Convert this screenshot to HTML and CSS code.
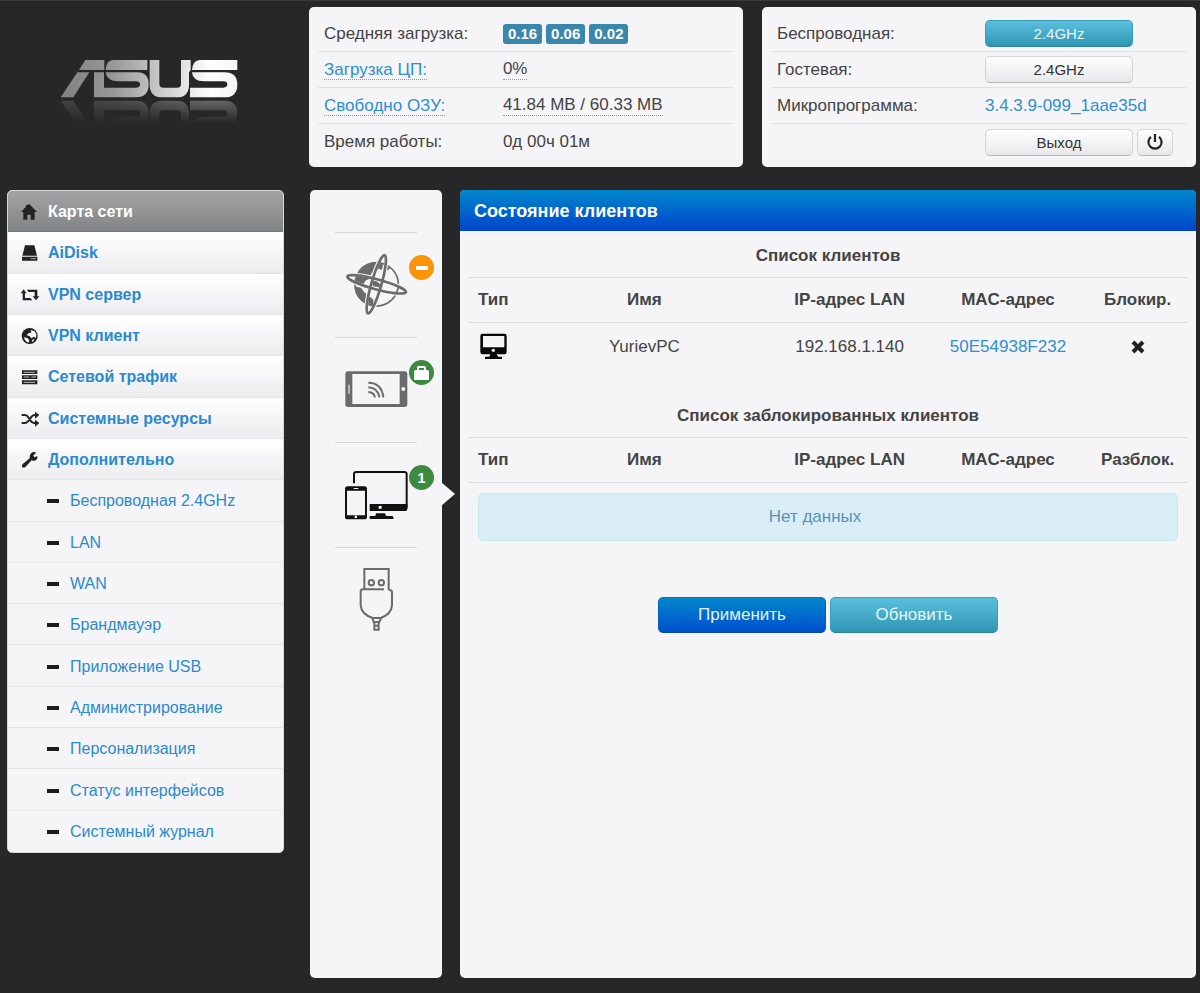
FILE: index.html
```html
<!DOCTYPE html>
<html lang="ru">
<head>
<meta charset="utf-8">
<title>ASUS — Карта сети</title>
<meta name="viewport" content="width=device-width, initial-scale=1">
<link rel="stylesheet" href="styles.css">
</head>
<body>
<div class="page">
  <aside class="side">
    <a class="logo" href="#" aria-label="ASUS">
      <svg viewBox="0 0 660 250" role="img" aria-hidden="true">
        <defs>
          <linearGradient id="metal" gradientUnits="userSpaceOnUse" x1="60" y1="0" x2="592" y2="0">
            <stop offset="0" stop-color="#808082"/><stop offset="0.3" stop-color="#98989a"/><stop offset="0.6" stop-color="#d0d0d2"/><stop offset="0.85" stop-color="#ffffff"/><stop offset="1" stop-color="#f4f4f4"/>
          </linearGradient>
          <linearGradient id="fade" gradientUnits="userSpaceOnUse" x1="0" y1="172" x2="0" y2="105">
            <stop offset="0" stop-color="#fff" stop-opacity="0.3"/><stop offset="1" stop-color="#fff" stop-opacity="0"/>
          </linearGradient>
          <mask id="mirror" maskUnits="userSpaceOnUse" x="0" y="0" width="660" height="250"><rect width="660" height="250" fill="url(#fade)"/></mask>
          <g id="mark" fill="url(#metal)">
            <path d="M136 60H193V90H117Z"/>
            <path d="M112 97H148L100 172H62Z"/>
            <path d="M162 97H192V143H290Q300 143 300 133Q300 124 288 124H235Q200 124 197 97H292Q326 97 326 133Q326 172 288 172H162Z"/>
            <path d="M216 60H322V90H197Q198 64 216 60Z"/>
            <path d="M329 60H358V132Q358 143 370 143H412Q423 143 423 132V60H452V90L447 97V134Q447 172 410 172H368Q329 172 329 134Z"/>
            <path d="M478 60H592V90H456Q458 62 478 60Z"/>
            <path d="M456 97H553Q592 97 592 134Q592 172 553 172H450V143H550Q562 143 562 133Q562 124 550 124H492Q458 124 456 97Z"/>
          </g>
        </defs>
        <use href="#mark"/>
        <g transform="translate(0 354) scale(1 -1)"><g mask="url(#mirror)"><use href="#mark"/></g></g>
      </svg>
    </a>
    <nav class="menu" aria-label="Главное меню">
      <a class="item item-active" href="#"><svg class="nav-icon" viewBox="60 65 60 60"><path d="M87 70L111 95H104V118H92V103H82V118H70V95H63L78 79V74H84V73Z"/></svg>Карта сети</a>
      <a class="item" href="#"><svg class="nav-icon" viewBox="60 190 60 60"><path d="M75 197H103L111 228H67ZM66 231H112V243H66Z"/><path d="M92 237H108" stroke="#aaa" stroke-width="3"/></svg>AiDisk</a>
      <a class="item" href="#"><svg class="nav-icon" viewBox="60 315 60 60"><path d="M71 328L80 340H75V354H91L97 361H68V340H62ZM80 329H112V349H118L108 361L98 349H104V336H86Z"/></svg>VPN сервер</a>
      <a class="item" href="#"><svg class="nav-icon" viewBox="60 439 60 60"><circle cx="89" cy="469" r="24"/><path fill="#fafafa" d="M92 451L104 455L109 464L108 475L101 471L94 476L88 469L80 467L86 460L94 459ZM72 473L82 475L88 482L85 489Q74 485 72 473ZM97 480L104 478L100 485L96 487Z"/></svg>VPN клиент</a>
      <a class="item" href="#"><svg class="nav-icon" viewBox="60 563 60 60"><path d="M66 573H112V584H66ZM66 588H112V599H66ZM66 603H112V615H66Z"/><path d="M71 579H105M71 593H88M94 593H108M71 609H105" stroke="#bbb" stroke-width="3"/></svg>Сетевой трафик</a>
      <a class="item" href="#"><svg class="nav-icon" viewBox="60 687 60 60"><path d="M65 705H75Q81 705 85 712L92 722Q96 729 102 729H107M65 729H74Q80 729 84 724L95 710Q99 705 104 705H107" fill="none" stroke="#222" stroke-width="6"/><path d="M105 695L118 705L105 716ZM105 719L118 729L105 740Z"/></svg>Системные ресурсы</a>
      <a class="item" href="#"><svg class="nav-icon" viewBox="60 811 60 60"><path d="M109 819L100 827L103 833L112 829Q114 840 104 843Q98 844 95 842L76 862Q69 866 66 861Q64 857 69 852L89 836Q87 826 94 820Q101 815 109 819Z"/></svg>Дополнительно</a>
      <a class="item sub" href="#">Беспроводная 2.4GHz</a>
      <a class="item sub" href="#">LAN</a>
      <a class="item sub" href="#">WAN</a>
      <a class="item sub" href="#">Брандмауэр</a>
      <a class="item sub" href="#">Приложение USB</a>
      <a class="item sub" href="#">Администрирование</a>
      <a class="item sub" href="#">Персонализация</a>
      <a class="item sub" href="#">Статус интерфейсов</a>
      <a class="item sub" href="#">Системный журнал</a>
    </nav>
  </aside>

  <div class="main">
    <header class="cards">
      <dl class="card card-load">
        <div class="row"><dt>Средняя загрузка:</dt><dd><span class="tag">0.16</span><span class="tag">0.06</span><span class="tag">0.02</span></dd></div>
        <div class="row"><dt><a class="hint" href="#">Загрузка ЦП:</a></dt><dd><span class="hint">0%</span></dd></div>
        <div class="row"><dt><a class="hint" href="#">Свободно ОЗУ:</a></dt><dd><span class="hint">41.84 MB / 60.33 MB</span></dd></div>
        <div class="row"><dt>Время работы:</dt><dd>0д 00ч 01м</dd></div>
      </dl>
      <dl class="card card-radio">
        <div class="row"><dt>Беспроводная:</dt><dd><button class="btn btn-small btn-info" type="button">2.4GHz</button></dd></div>
        <div class="row"><dt>Гостевая:</dt><dd><button class="btn btn-small" type="button">2.4GHz</button></dd></div>
        <div class="row"><dt>Микропрограмма:</dt><dd><a href="#">3.4.3.9-099_1aae35d</a></dd></div>
        <div class="row"><dt></dt><dd><button class="btn btn-small" type="button">Выход</button><button class="btn btn-power" type="button" aria-label="Перезагрузка"><svg viewBox="0 0 18 18"><path d="M5 3.8A6.6 6.6 0 1 0 13 3.8M9 1V9" fill="none" stroke="#222" stroke-width="2.2"/></svg></button></dd></div>
      </dl>
    </header>

    <div class="work">
      <nav class="rail" aria-label="Карта сети">
        <a class="stop" href="#" aria-label="Интернет">
          <svg viewBox="102 204 192 192" fill="none" stroke="#6b6b6d">
            <circle cx="200" cy="298" r="65" stroke-width="5"/>
            <path fill="#6b6b6d" stroke="none" d="M136 290Q140 250 170 237Q190 229 208 232L219 240L216 254L204 251L194 263L184 264L180 281L168 286L160 297ZM134 304L153 308L162 321L175 331L190 344L190 363Q152 358 137 325ZM184 290Q202 284 211 300L214 314L204 306L190 304ZM228 238L241 249L230 259Z"/>
            <ellipse cx="200" cy="298" rx="93" ry="17" transform="rotate(15 200 298)" stroke="#f5f4f7" stroke-width="11"/>
            <ellipse cx="199" cy="298" rx="93" ry="17" transform="rotate(-74 199 298)" stroke="#f5f4f7" stroke-width="11"/>
            <ellipse cx="200" cy="298" rx="91" ry="15" transform="rotate(15 200 298)" stroke-width="8"/>
            <ellipse cx="199" cy="298" rx="91" ry="15" transform="rotate(-74 199 298)" stroke-width="8"/>
          </svg>
          <span class="badge badge-off"><svg viewBox="0 0 25 25"><path d="M7 11H19V15H7Z" fill="#fff"/></svg></span>
        </a>
        <a class="stop" href="#" aria-label="Беспроводная сеть">
          <svg viewBox="102 519 192 192">
            <path fill="#6b6b6d" fill-rule="evenodd" d="M114 559H284Q292 559 292 567V657Q292 666 284 666H114Q106 666 106 657V567Q106 559 114 559ZM127 567V657H269V567Z"/>
            <path d="M117 599V626" stroke="#ddd" stroke-width="4"/><circle cx="280" cy="612" r="6" fill="#f5f4f7"/>
            <path d="M175 593Q215 593 220 637M175 607Q204 609 208 637M175 621Q192 622 195 637" fill="none" stroke="#6b6b6d" stroke-width="6"/>
          </svg>
          <span class="badge"><svg viewBox="0 0 25 25"><path d="M5 12Q5 10 7 10H8V7Q8 6 10 6H15Q17 6 17 8V10H18Q20 10 20 12V20H5ZM10 8V10H15V8Z" fill="#fff" fill-rule="evenodd"/></svg></span>
        </a>
        <a class="stop stop-current" href="#" aria-label="Клиенты">
          <svg viewBox="102 99 192 192">
            <path d="M132 160V133Q132 126 139 126H283Q290 126 290 133V235" fill="none" stroke="#111" stroke-width="6"/>
            <path d="M179 222H292V236Q292 243 284 243H179ZM198 250H225L228 258H248Q251 262 251 267H179V258H196Z" fill="#111"/>
            <path fill="#111" fill-rule="evenodd" d="M113 169H163Q171 169 171 177V260Q171 268 163 268H113Q105 268 105 260V177Q105 169 113 169ZM111 182V256H165V182Z"/>
            <path d="M206 228H215V236H206ZM134 257H141V264H134ZM131 174H145V177H131Z" fill="#f5f4f7"/>
          </svg>
          <span class="badge">1</span>
        </a>
        <a class="stop" href="#" aria-label="USB">
          <svg viewBox="102 412 192 192" fill="none" stroke="#6b6b6d" stroke-width="6">
            <path d="M163 474V415H236V478M222 476H158Q152 476 152 484V524Q154 550 188 562H212Q244 550 246 524V484Q246 478 236 478M187 562L191 574H208L213 562M193 574V597H206V574M193 585H206"/>
            <circle cx="184" cy="456" r="8"/><circle cx="214" cy="456" r="8"/>
          </svg>
        </a>
      </nav>

      <main class="panel">
        <h1 class="panel-head">Состояние клиентов</h1>
        <form class="panel-body">
          <table class="grid">
            <caption>Список клиентов</caption>
            <thead><tr><th class="c-type">Тип</th><th class="c-name">Имя</th><th class="c-ip">IP-адрес LAN</th><th class="c-mac">MAC-адрес</th><th class="c-act">Блокир.</th></tr></thead>
            <tbody><tr>
              <td><svg class="pc" viewBox="0 0 81 81"><path fill-rule="evenodd" d="M8 2H73Q80 2 80 9V57Q80 64 73 64H50L54 71H66V78H15V71H28L31 64H8Q1 64 1 57V9Q1 2 8 2ZM9 9V43H73V9Z"/><circle cx="40" cy="52" r="5" fill="#f5f4f7"/></svg></td>
              <td>YurievPC</td><td>192.168.1.140</td><td><a href="#">50E54938F232</a></td>
              <td><button class="block" type="button" aria-label="Блокировать"><svg viewBox="0 0 14 14"><path d="M2 2L12 12M12 2L2 12" stroke="#222" stroke-width="4"/></svg></button></td>
            </tr></tbody>
          </table>
          <table class="grid">
            <caption>Список заблокированных клиентов</caption>
            <thead><tr><th class="c-type">Тип</th><th class="c-name">Имя</th><th class="c-ip">IP-адрес LAN</th><th class="c-mac">MAC-адрес</th><th class="c-act">Разблок.</th></tr></thead>
            <tbody><tr><td class="none" colspan="5"><div class="alert">Нет данных</div></td></tr></tbody>
          </table>
          <div class="actions">
            <button class="btn btn-large btn-primary" type="button">Применить</button>
            <button class="btn btn-large btn-info" type="button">Обновить</button>
          </div>
        </form>
      </main>
    </div>
  </div>
</div>
</body>
</html>
```

FILE: styles.css
```css
* { box-sizing: border-box; }

body {
  margin: 0;
  background: #272629;
  color: #444;
  font-family: "Liberation Sans", Arial, sans-serif;
  font-size: 17px;
  line-height: 24px;
}

a { color: #2f8fd0; text-decoration: none; }
button { font-family: inherit; cursor: pointer; }
svg { display: block; }

.page {
  display: flex;
  gap: 25px;
  min-height: 100vh;
  padding: 6px 4px 15px 7px;
  border-top: 1px solid #3a393b;
}

/* Sidebar */
.side { flex: 0 0 277px; }
.logo { display: block; height: 183px; padding: 33px 24px 0 33px; }

.menu {
  display: grid;
  grid-auto-rows: 1fr;
  min-height: 663px;
  overflow: hidden;
  border: 1px solid #d8d8da;
  border-radius: 5px;
  background: #f5f4f7;
}
.item {
  display: flex;
  align-items: center;
  gap: 8px;
  padding: 2px 12px 0;
  border-bottom: 1px solid #e4e3e6;
  background: linear-gradient(#fff, #ececef);
  color: #2a8ad0;
  font-size: 16px;
  font-weight: bold;
}
.item-active {
  border-bottom-color: #77797a;
  background: linear-gradient(#a3a4a7, #818485);
  color: #fff;
}
.nav-icon { width: 20px; height: 20px; fill: #222; }
.sub {
  gap: 11px;
  padding-left: 39px;
  background: #f5f4f7;
  font-weight: normal;
}
.sub::before { content: ""; width: 12px; height: 4px; background: #1c1c1e; }
.item:last-child { border-bottom: 0; }

/* Right-hand side */
.main {
  display: flex;
  flex: 1;
  flex-direction: column;
  gap: 23px;
  min-width: 0;
}
.cards { display: grid; grid-template-columns: 1fr 1fr; gap: 19px; }
.card {
  margin: 0;
  padding: 9px 9px 7px;
  border-radius: 5px;
  background: #f5f4f7;
}
.row {
  display: grid;
  align-items: center;
  min-height: 36px;
  border-bottom: 1px solid #e2e1e4;
}
.row:last-child { border-bottom: 0; }
.card-load .row { grid-template-columns: 43% 1fr; }
.card-radio .row { grid-template-columns: 50% 1fr; }
.row dt { padding-left: 6px; }
.row dd { display: flex; gap: 4px; margin: 0; padding-left: 6px; }
.hint { border-bottom: 1px dotted #999; line-height: 20px; }
.tag {
  padding: 0 5px;
  border-radius: 3px;
  background: #3a87ad;
  color: #fff;
  font-size: 15px;
  font-weight: bold;
  line-height: 20px;
}

.btn {
  border: 1px solid #d4d3d6;
  border-bottom-color: #b5b4b7;
  border-radius: 5px;
  background: linear-gradient(#fff, #e8e7ea);
  color: #333;
}
.btn-small { width: 148px; height: 27px; padding: 0; font-size: 15px; }
.btn-power { display: grid; place-items: center; width: 36px; height: 27px; padding: 0; }
.btn-power svg { width: 18px; height: 18px; }
.btn-large { width: 168px; height: 36px; padding: 0; font-size: 17px; }
.btn-info {
  border-color: #3a9fba #3a9fba #2a8299;
  background: linear-gradient(#5bc0de, #2f96b4);
  color: #e9f6fa;
}
.btn-primary {
  border-color: #0078c4 #0060c4 #0048b0;
  background: linear-gradient(#0088cc, #0050cc);
  color: #e3f0fb;
}

.work { display: flex; flex: 1; gap: 18px; padding-left: 1px; }

/* Network map rail */
.rail {
  display: flex;
  flex: 0 0 132px;
  flex-direction: column;
  align-items: center;
  padding-top: 42px;
  border-radius: 5px;
  background: #f5f4f7;
}
.stop {
  position: relative;
  display: grid;
  place-items: center;
  width: 82px;
  height: 105px;
  border-top: 1px solid #d6d5d8;
}
.stop > svg { width: 64px; height: 64px; }
.badge {
  position: absolute;
  top: 22px;
  left: 74px;
  width: 25px;
  height: 25px;
  border-radius: 50%;
  background: #3c8a40;
  color: #fff;
  font-size: 15px;
  font-weight: bold;
  line-height: 25px;
  text-align: center;
}
.badge-off { background: #f89406; }
.stop-current::after {
  content: "";
  position: absolute;
  top: 39px;
  left: 106px;
  width: 14px;
  height: 24px;
  background: #f5f4f7;
  clip-path: polygon(0 0, 100% 50%, 0 100%);
}

/* Clients panel */
.panel {
  flex: 1;
  min-width: 0;
  overflow: hidden;
  border-radius: 5px;
  background: #f5f4f7;
}
.panel-head {
  margin: 0;
  padding: 9px 14px 8px;
  background: linear-gradient(#0088cc, #0044cc);
  color: #fff;
  font-size: 18px;
  line-height: 24px;
}
.panel-body { padding: 0 8px 20px; }
.grid {
  width: 100%;
  table-layout: fixed;
  border-collapse: collapse;
  text-align: center;
}
.grid caption { padding: 13px 0 9px; font-weight: bold; }
.grid th { padding: 10px 0; border-top: 1px solid #dddce0; white-space: nowrap; }
.grid td { height: 48px; padding: 0; border-top: 1px solid #dddce0; }
.grid + .grid { margin-top: 20px; }
.c-type { width: 7%; }
.c-name { width: 35%; }
.c-ip { width: 22%; }
.c-mac { width: 22%; }
.c-act { width: 14%; }
.pc { width: 27px; height: 27px; margin: 0 auto; fill: #080808; }
.block {
  display: block;
  margin: 0 auto;
  padding: 0;
  border: 0;
  background: none;
}
.block svg { width: 14px; height: 14px; }
.grid .none { height: auto; padding: 10px; }
.alert {
  padding: 11px 38px 11px 12px;
  border: 1px solid #c5e9f0;
  border-radius: 5px;
  background: #d9edf7;
  color: #5b93b2;
}
.actions {
  display: flex;
  justify-content: center;
  gap: 4px;
  margin-top: 46px;
}
```
